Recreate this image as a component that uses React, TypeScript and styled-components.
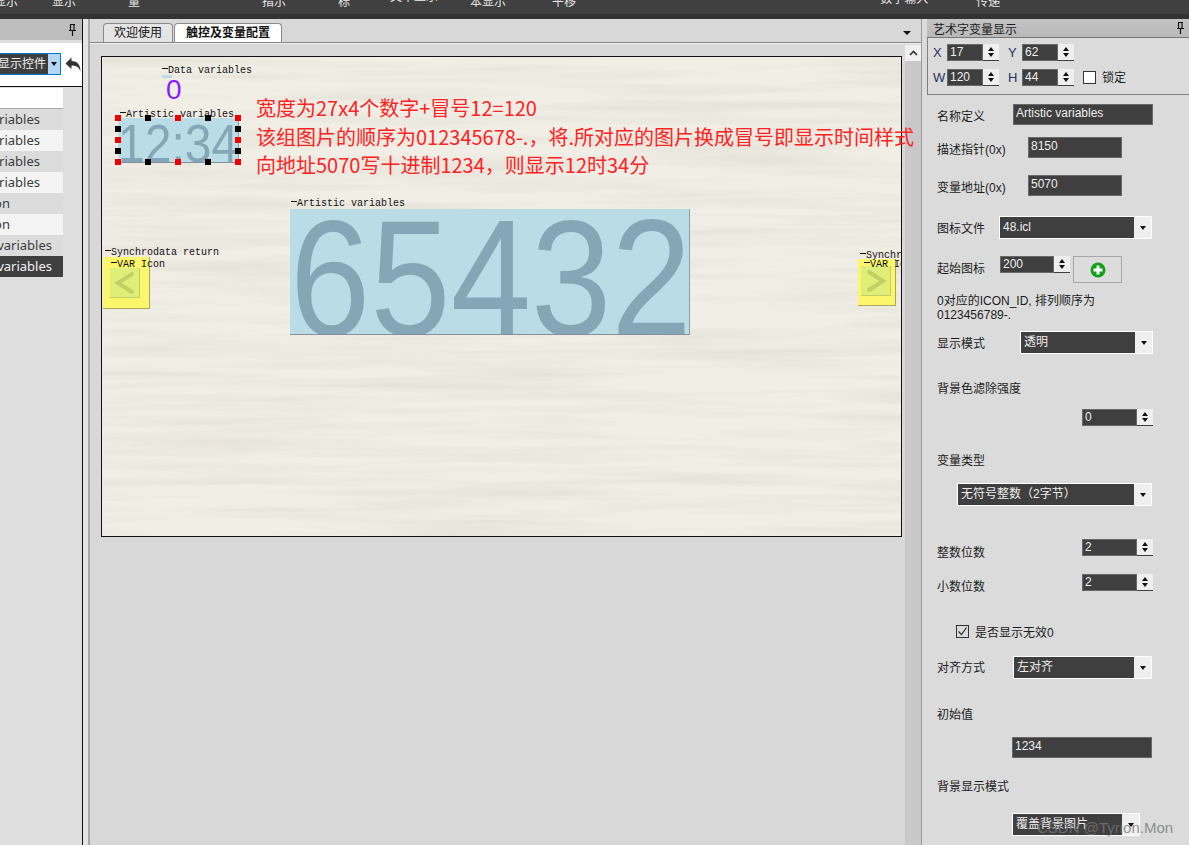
import React from 'react'
import styled, { createGlobalStyle } from 'styled-components'

const CJK = `"Liberation Sans", "Noto Sans CJK SC", sans-serif`
const MONO = `"Liberation Mono", monospace`

const GlobalStyle = createGlobalStyle`
  html, body { margin: 0; padding: 0; background: #d8d8d8; }
  body { font-family: ${CJK}; font-size: 12px; color: #1a1a1a; }
`

const Page = styled.div`
  position: relative;
  width: 1189px;
  height: 845px;
  overflow: hidden;
  display: flex;
  flex-direction: column;
`

const TopBar = styled.div`
  height: 19px;
  flex: none;
  display: flex;
  overflow: hidden;
  background: linear-gradient(#404040 0 14px, #333 14px);
`

const TopLabel = styled.span<{ $gap: number; $up?: number }>`
  margin-left: ${p => p.$gap}px;
  margin-top: ${p => -(p.$up ?? 5)}px;
  color: #e6e6e6;
  white-space: nowrap;
  line-height: 14px;
`

const Main = styled.div`
  flex: 1;
  display: flex;
  min-height: 0;
`

const LeftPanel = styled.aside`
  width: 83px;
  flex: none;
  display: flex;
  flex-direction: column;
  background: #dedede;
  border-right: 1px solid #111;
  box-sizing: border-box;
`

const PanelHead = styled.div`
  height: 21px;
  flex: none;
  display: flex;
  align-items: center;
  justify-content: flex-end;
  padding-right: 5px;
  background: #bdbdbd;
`

const LeftTools = styled.div`
  margin-top: 3px;
  height: 44px;
  flex: none;
  display: flex;
  align-items: center;
  gap: 4px;
  background: #fff;
  border-bottom: 1px solid #111;
  box-sizing: border-box;
`

const ToolSelect = styled.div`
  width: 61px;
  height: 22px;
  margin-top: -1px;
  flex: none;
  display: flex;
  justify-content: flex-end;
  box-sizing: border-box;
  overflow: hidden;
  background: #3f3f3f;
  border: 1px solid #0078d7;
  border-left: 0;
  color: #eee;
  line-height: 20px;
  white-space: nowrap;
`

const ToolArrow = styled.div`
  width: 12px;
  margin-left: 2px;
  flex: none;
  display: flex;
  align-items: center;
  justify-content: center;
  background: #b4d6f2;
`

const List = styled.div`
  width: 63px;
  margin-top: 1px;
`

const ListRow = styled.div<{ $tone: 'blank' | 'even' | 'odd' | 'active'; $right: number }>`
  height: 21px;
  box-sizing: border-box;
  display: flex;
  justify-content: flex-end;
  overflow: hidden;
  padding-right: ${p => p.$right}px;
  font: 13px/20px "Noto Sans", sans-serif;
  white-space: nowrap;
  color: ${p => (p.$tone === 'active' ? '#f2f2f2' : '#3c3c3c')};
  background: ${p =>
    p.$tone === 'active' ? '#3f3f3f' : p.$tone === 'even' ? '#dcdcdc' : p.$tone === 'odd' ? '#f4f4f4' : '#fff'};
  border-bottom: ${p => (p.$tone === 'blank' ? '1px solid #aaa' : '0')};
`

const Gutter = styled.div`
  width: 7px;
  flex: none;
  background: linear-gradient(90deg, #e4e4e4 0 5px, #a8a8a8 5px);
`

const Center = styled.section`
  flex: 1;
  min-width: 0;
  display: flex;
  flex-direction: column;
  background: #d8d8d8;
`

const TabStrip = styled.div`
  height: 24px;
  flex: none;
  display: flex;
  align-items: flex-end;
  gap: 1px;
  padding-left: 13px;
  box-sizing: border-box;
  border-bottom: 1px solid #858585;
  position: relative;
`

const Tab = styled.div<{ $active?: boolean; $w: number }>`
  width: ${p => p.$w}px;
  height: 19px;
  box-sizing: border-box;
  text-align: center;
  line-height: 18px;
  border: 1px solid #8a8a8a;
  border-bottom: 0;
  border-radius: 4px 4px 0 0;
  color: #111;
  background: ${p => (p.$active ? '#fff' : '#e4e4e4')};
  font-weight: ${p => (p.$active ? 700 : 400)};
`

const TabMenu = styled.i`
  position: absolute;
  right: 10px;
  top: 12px;
  border: 4px solid transparent;
  border-top: 4px solid #111;
  border-bottom: 0;
`

const CenterBody = styled.div`
  flex: 1;
  min-height: 0;
  display: flex;
  padding: 1px 0 0 11px;
  box-sizing: border-box;
  border-top: 1px solid #f0f0f0;
`

const CanvasWrap = styled.div`
  padding-top: 11px;
  width: 801px;
  flex: none;
`

const Canvas = styled.div`
  position: relative;
  width: 799px;
  height: 479px;
  border: 1px solid #111;
  overflow: hidden;
  background: #f1eee6;
`

const Grain = styled.svg`
  position: absolute;
  left: 0;
  top: 0;
  width: 100%;
  height: 100%;
`

const Scrollbar = styled.div`
  width: 16px;
  margin-left: 3px;
  flex: none;
  background: #c8c8c8;
`

const ScrollUp = styled.div`
  height: 16px;
  display: flex;
  align-items: center;
  justify-content: center;
  background: #f0f0f0;
`

const WidgetLabel = styled.div<{ $x: number; $y: number }>`
  position: absolute;
  left: ${p => p.$x}px;
  top: ${p => p.$y}px;
  font: 10px/11px ${MONO};
  color: #111;
  white-space: nowrap;
  &::before {
    content: '';
    display: inline-block;
    width: 6px;
    height: 1px;
    margin-right: 0;
    vertical-align: 4px;
    background: #111;
  }
`

const BlueChip = styled.div`
  position: absolute;
  left: 60px;
  top: 18px;
  width: 10px;
  height: 3px;
  background: #bcdde8;
`

const ZeroText = styled.div`
  position: absolute;
  left: 64px;
  top: 19px;
  font: 28px/28px "Liberation Sans", sans-serif;
  color: #8a1cff;
`

const DigitBox = styled.div<{ $x: number; $y: number; $w: number; $h: number }>`
  position: absolute;
  left: ${p => p.$x}px;
  top: ${p => p.$y}px;
  width: ${p => p.$w}px;
  height: ${p => p.$h}px;
  overflow: hidden;
  background: #b9dce7;
  border-right: 1px solid #8a9da6;
  border-bottom: 1px solid #7f929b;
  box-sizing: border-box;
`

const Digits = styled.div<{ $size: number; $top: number; $sx: number; $left: number }>`
  position: absolute;
  left: ${p => p.$left}px;
  top: ${p => p.$top}px;
  font: ${p => p.$size}px/${p => p.$size}px "Liberation Sans", sans-serif;
  color: #85a6b7;
  white-space: nowrap;
  transform: scaleX(${p => p.$sx});
  transform-origin: 0 0;
`

const Handle = styled.i<{ $x: number; $y: number; $red: boolean }>`
  position: absolute;
  left: ${p => p.$x - 3}px;
  top: ${p => p.$y - 3}px;
  width: 6px;
  height: 6px;
  background: ${p => (p.$red ? '#f00000' : '#000')};
`

const NavKey = styled.div<{ $x: number; $y: number; $w: number; $h: number }>`
  position: absolute;
  left: ${p => p.$x}px;
  top: ${p => p.$y}px;
  width: ${p => p.$w}px;
  height: ${p => p.$h}px;
  background: #fbf66c;
  border-right: 1px solid #aaa858;
  border-bottom: 1px solid #aaa858;
  box-sizing: border-box;
`

const NavFace = styled.div<{ $x: number; $y: number }>`
  position: absolute;
  left: ${p => p.$x}px;
  top: ${p => p.$y}px;
  width: 30px;
  height: 30px;
  display: flex;
  align-items: center;
  justify-content: center;
  box-sizing: border-box;
  background: #dfee78;
  border-right: 1px solid #c4cc66;
  border-bottom: 1px solid #c4cc66;
`

const RightPanel = styled.aside`
  width: 268px;
  flex: none;
  box-sizing: border-box;
  padding-left: 5px;
  background: #dbdbdb;
  border-left: 1px solid #9a9a9a;
  display: flex;
  flex-direction: column;
`

const RightHead = styled(PanelHead)`
  height: 18px;
  justify-content: space-between;
  padding: 0 4px 0 6px;
  background: linear-gradient(#c4c4c4, #b8b8b8);
  border-bottom: 1px solid #777;
  box-sizing: content-box;
  color: #1c1c1c;
`

const GeoBox = styled.div`
  height: 57px;
  flex: none;
  box-sizing: border-box;
  border: 1px solid #808080;
  border-top: 0;
  border-right: 0;
  border-bottom: 1px solid #808080;
  padding: 6px 0 0 5px;
  display: flex;
  flex-direction: column;
  gap: 8px;
`

const GeoRow = styled.div`
  display: flex;
  align-items: center;
  height: 17px;
`

const GeoLabel = styled.span<{ $w: number }>`
  width: ${p => p.$w}px;
  flex: none;
  color: #2a3060;
  font-size: 13px;
`

const SpinBox = styled.div<{ $w: number; $gapRight?: number }>`
  display: flex;
  flex: none;
  width: ${p => p.$w + 16}px;
  height: 17px;
  margin-right: ${p => p.$gapRight ?? 0}px;
`

const SpinValue = styled.div`
  flex: 1;
  box-sizing: border-box;
  padding-left: 2px;
  background: #3f3f3f;
  border: 1px solid #686868;
  color: #eee;
  line-height: 15px;
  font-size: 12px;
`

const SpinKeys = styled.div`
  width: 16px;
  flex: none;
  box-sizing: border-box;
  display: flex;
  flex-direction: column;
  align-items: center;
  justify-content: center;
  gap: 2px;
  background: #efefef;
  border-bottom: 1px solid #3f3f3f;
`

const SpinUp = styled.i`
  border: 3px solid transparent;
  border-top: 0;
  border-bottom: 4px solid #111;
`

const SpinDown = styled.i`
  border: 3px solid transparent;
  border-bottom: 0;
  border-top: 4px solid #111;
`

const CheckBox = styled.span<{ $checked?: boolean }>`
  width: 13px;
  height: 13px;
  flex: none;
  box-sizing: border-box;
  display: flex;
  align-items: center;
  justify-content: center;
  background: ${p => (p.$checked ? 'transparent' : '#fff')};
  border: 1px solid #333;
`

const Form = styled.div`
  padding-left: 10px;
  display: flex;
  flex-direction: column;
`

const Row = styled.div<{ $mt: number; $left: number; $w: number; $h: number }>`
  display: grid;
  grid-template-columns: ${p => p.$left}px ${p => p.$w}px;
  height: ${p => p.$h}px;
  margin-top: ${p => p.$mt}px;
  flex: none;
`

const Label = styled.div<{ $dy?: number; $mt?: number }>`
  padding-top: ${p => p.$dy ?? 0}px;
  margin-top: ${p => p.$mt ?? 0}px;
  line-height: 14px;
  color: #1c1c1c;
  white-space: nowrap;
`

const Hint = styled.div`
  margin-top: 11px;
  line-height: 14px;
  font-size: 12px;
  color: #1c1c1c;
  white-space: nowrap;
`

const TextValue = styled.div`
  box-sizing: border-box;
  padding-left: 2px;
  background: #3f3f3f;
  border: 1px solid #686868;
  color: #eee;
  line-height: 17px;
  white-space: nowrap;
  overflow: hidden;
`

const Select = styled.div`
  display: flex;
  box-sizing: border-box;
  border: 1px solid #fff;
  background: #efefef;
`

const SelectValue = styled.div`
  flex: 1;
  min-width: 0;
  padding-left: 3px;
  background: #3f3f3f;
  color: #eee;
  line-height: 20px;
  white-space: nowrap;
`

const SelectArrow = styled.div`
  width: 17px;
  flex: none;
  display: flex;
  align-items: center;
  justify-content: center;
`

const CheckRow = styled.div`
  margin: 34px 0 0 19px;
  height: 13px;
  display: flex;
  align-items: center;
  gap: 6px;
  color: #1c1c1c;
`

const AddButton = styled.div`
  width: 49px;
  height: 27px;
  margin-left: 3px;
  flex: none;
  box-sizing: border-box;
  display: flex;
  align-items: center;
  justify-content: center;
  background: #dcdcdc;
  border: 1px solid #a6a6a6;
`

const SpinWithButton = styled.div`
  display: flex;
  align-items: flex-start;
`

const Note = styled.div`
  position: absolute;
  left: 256px;
  top: 94px;
  color: #ff2222;
  font: 20px/28.5px "Noto Sans CJK SC", sans-serif;
  white-space: nowrap;
`

const Watermark = styled.div`
  position: absolute;
  left: 1037px;
  top: 819px;
  font: 15px/17px "Liberation Sans", sans-serif;
  color: rgba(120, 120, 120, 0.8);
  white-space: nowrap;
`

const Pin = () => (
  <svg width="9" height="12" viewBox="0 0 9 12">
    <path d="M2 0.5h5M2.5 1v5M6 1v5M1 6.5h7M4.5 7v5" stroke="#111" strokeWidth="1.2" fill="none" />
  </svg>
)

const Chevron = ({ flip }: { flip?: boolean }) => (
  <svg width="24" height="24" viewBox="0 0 24 24">
    <path
      d={flip ? 'M5 3l14 9-14 9' : 'M19 3L5 12l14 9'}
      stroke="#c3cf62"
      strokeWidth="4"
      strokeLinecap="round"
      fill="none"
    />
  </svg>
)

const Caret = () => <SpinDown />

const Spin = ({ value, w, gapRight }: { value: string; w: number; gapRight?: number }) => (
  <SpinBox $w={w} $gapRight={gapRight}>
    <SpinValue>{value}</SpinValue>
    <SpinKeys>
      <SpinUp />
      <SpinDown />
    </SpinKeys>
  </SpinBox>
)

const Drop = ({ value }: { value: string }) => (
  <Select>
    <SelectValue>{value}</SelectValue>
    <SelectArrow>
      <Caret />
    </SelectArrow>
  </Select>
)

const listRows = [
  { tone: 'even', text: 'Artistic variables', right: 23 },
  { tone: 'odd', text: 'Artistic variables', right: 23 },
  { tone: 'even', text: 'Artistic variables', right: 23 },
  { tone: 'odd', text: 'Artistic variables', right: 23 },
  { tone: 'even', text: 'VAR Icon', right: 53 },
  { tone: 'odd', text: 'VAR Icon', right: 53 },
  { tone: 'even', text: 'Artistic variables', right: 11 },
  { tone: 'active', text: 'Artistic variables', right: 11 },
] as const

const handleCols = [16, 46, 76, 106, 136]
const handleRows = [61, 72, 83, 94, 105]

export default function App() {
  return (
    <Page>
      <GlobalStyle />
      <TopBar>
        <TopLabel $gap={-6}>显示</TopLabel>
        <TopLabel $gap={34}>显示</TopLabel>
        <TopLabel $gap={52}>量</TopLabel>
        <TopLabel $gap={122}>指示</TopLabel>
        <TopLabel $gap={52}>标</TopLabel>
        <TopLabel $gap={40} $up={10}>文本显示</TopLabel>
        <TopLabel $gap={32}>本显示</TopLabel>
        <TopLabel $gap={46}>平移</TopLabel>
        <TopLabel $gap={304} $up={8}>数字输入</TopLabel>
        <TopLabel $gap={48}>传递</TopLabel>
      </TopBar>
      <Main>
        <LeftPanel>
          <PanelHead>
            <Pin />
          </PanelHead>
          <LeftTools>
            <ToolSelect>
              显示控件
              <ToolArrow>
                <Caret />
              </ToolArrow>
            </ToolSelect>
            <svg width="16" height="16" viewBox="0 0 16 16">
              <path d="M0.5 6.5L6.5 0.5v3.6c5 0 9 3 9 10.4-1.2-4-4-6-9-6v3.6z" fill="#333" />
            </svg>
          </LeftTools>
          <List>
            <ListRow $tone="blank" $right={0} />
            {listRows.map((row, i) => (
              <ListRow key={i} $tone={row.tone} $right={row.right}>
                {row.text}
              </ListRow>
            ))}
          </List>
        </LeftPanel>
        <Gutter />
        <Center>
          <TabStrip>
            <Tab $w={70}>欢迎使用</Tab>
            <Tab $w={108} $active>触控及变量配置</Tab>
            <TabMenu />
          </TabStrip>
          <CenterBody>
            <CanvasWrap>
              <Canvas>
                <Grain>
                  <filter id="paper">
                    <feTurbulence type="fractalNoise" baseFrequency="0.004 0.09" numOctaves="3" seed="4" />
                    <feColorMatrix values="0 0 0 0 0.45  0 0 0 0 0.42  0 0 0 0 0.35  1.1 0 0 0 -0.42" />
                  </filter>
                  <rect width="100%" height="100%" filter="url(#paper)" opacity="0.35" />
                </Grain>
                <WidgetLabel $x={60} $y={8}>Data variables</WidgetLabel>
                <BlueChip />
                <ZeroText>0</ZeroText>
                <DigitBox $x={16} $y={61} $w={121} $h={45}>
                  <Digits $size={54} $top={-2} $sx={0.89} $left={0}>12:34</Digits>
                </DigitBox>
                <WidgetLabel $x={18} $y={52}>Artistic variables</WidgetLabel>
                {handleCols.map((x, i) => (
                  <React.Fragment key={x}>
                    <Handle $x={x} $y={61} $red={i % 2 === 0} />
                    <Handle $x={x} $y={105} $red={i % 2 === 0} />
                  </React.Fragment>
                ))}
                {handleRows.slice(1, 4).map((y, i) => (
                  <React.Fragment key={y}>
                    <Handle $x={16} $y={y} $red={i === 1} />
                    <Handle $x={136} $y={y} $red={i === 1} />
                  </React.Fragment>
                ))}
                <WidgetLabel $x={189} $y={141}>Artistic variables</WidgetLabel>
                <DigitBox $x={188} $y={152} $w={400} $h={126}>
                  <Digits $size={166} $top={-14} $sx={0.87} $left={0}>65432</Digits>
                </DigitBox>
                <NavKey $x={1} $y={200} $w={47} $h={52} />
                <NavFace $x={8} $y={211}>
                  <Chevron />
                </NavFace>
                <WidgetLabel $x={3} $y={190}>Synchrodata return</WidgetLabel>
                <WidgetLabel $x={9} $y={202}>VAR Icon</WidgetLabel>
                <NavKey $x={756} $y={202} $w={38} $h={47} />
                <NavFace $x={759} $y={209}>
                  <Chevron flip />
                </NavFace>
                <WidgetLabel $x={758} $y={193}>Synchrodata return</WidgetLabel>
                <WidgetLabel $x={762} $y={202}>VAR Icon</WidgetLabel>
              </Canvas>
            </CanvasWrap>
            <Scrollbar>
              <ScrollUp>
                <svg width="9" height="6" viewBox="0 0 9 6">
                  <path d="M1 5l3.5-3.5L8 5" stroke="#333" strokeWidth="1.6" fill="none" />
                </svg>
              </ScrollUp>
            </Scrollbar>
          </CenterBody>
        </Center>
        <RightPanel>
          <RightHead>
            <span>艺术字变量显示</span>
            <Pin />
          </RightHead>
          <GeoBox>
            <GeoRow>
              <GeoLabel $w={14}>X</GeoLabel>
              <Spin value="17" w={36} gapRight={9} />
              <GeoLabel $w={14}>Y</GeoLabel>
              <Spin value="62" w={36} gapRight={9} />
            </GeoRow>
            <GeoRow>
              <GeoLabel $w={14}>W</GeoLabel>
              <Spin value="120" w={36} gapRight={9} />
              <GeoLabel $w={14}>H</GeoLabel>
              <Spin value="44" w={36} gapRight={9} />
              <CheckBox />
              <Label style={{ marginLeft: 6 }}>锁定</Label>
            </GeoRow>
          </GeoBox>
          <Form>
            <Row $mt={9} $left={76} $w={140} $h={21}>
              <Label $dy={6}>名称定义</Label>
              <TextValue>Artistic variables</TextValue>
            </Row>
            <Row $mt={12} $left={91} $w={94} $h={21}>
              <Label $dy={6}>描述指针(0x)</Label>
              <TextValue>8150</TextValue>
            </Row>
            <Row $mt={17} $left={91} $w={94} $h={21}>
              <Label $dy={6}>变量地址(0x)</Label>
              <TextValue>5070</TextValue>
            </Row>
            <Row $mt={20} $left={62} $w={153} $h={23}>
              <Label $dy={6}>图标文件</Label>
              <Drop value="48.icl" />
            </Row>
            <Row $mt={17} $left={63} $w={122} $h={27}>
              <Label $dy={6}>起始图标</Label>
              <SpinWithButton>
                <Spin value="200" w={54} />
                <AddButton>
                  <svg width="16" height="16" viewBox="0 0 16 16">
                    <circle cx="8" cy="8" r="7.5" fill="#12a01c" />
                    <path d="M8 3.5v9M3.5 8h9" stroke="#fff" strokeWidth="3" />
                  </svg>
                </AddButton>
              </SpinWithButton>
            </Row>
            <Hint>
              0对应的ICON_ID, 排列顺序为
              <br />
              0123456789-.
            </Hint>
            <Row $mt={9} $left={83} $w={133} $h={23}>
              <Label $dy={6}>显示模式</Label>
              <Drop value="透明" />
            </Row>
            <Label $mt={28}>背景色滤除强度</Label>
            <Row $mt={13} $left={145} $w={71} $h={17}>
              <span />
              <Spin value="0" w={55} />
            </Row>
            <Label $mt={28}>变量类型</Label>
            <Row $mt={15} $left={20} $w={195} $h={23}>
              <span />
              <Drop value="无符号整数（2字节）" />
            </Row>
            <Row $mt={33} $left={145} $w={71} $h={17}>
              <Label $dy={7}>整数位数</Label>
              <Spin value="2" w={55} />
            </Row>
            <Row $mt={18} $left={145} $w={71} $h={17}>
              <Label $dy={6}>小数位数</Label>
              <Spin value="2" w={55} />
            </Row>
            <CheckRow>
              <CheckBox $checked>
                <svg width="11" height="11" viewBox="0 0 11 11">
                  <path d="M1.5 5.5l3 3 5-7" stroke="#333" strokeWidth="1.2" fill="none" />
                </svg>
              </CheckBox>
              是否显示无效0
            </CheckRow>
            <Row $mt={18} $left={76} $w={139} $h={23}>
              <Label $dy={5}>对齐方式</Label>
              <Drop value="左对齐" />
            </Row>
            <Label $mt={29}>初始值</Label>
            <Row $mt={15} $left={75} $w={140} $h={21}>
              <span />
              <TextValue>1234</TextValue>
            </Row>
            <Label $mt={22}>背景显示模式</Label>
            <Row $mt={19} $left={75} $w={128} $h={23}>
              <span />
              <Drop value="覆盖背景图片" />
            </Row>
          </Form>
        </RightPanel>
      </Main>
      <Note>
        宽度为27x4个数字+冒号12=120
        <br />
        该组图片的顺序为012345678-.，将.所对应的图片换成冒号即显示时间样式
        <br />
        向地址5070写十进制1234，则显示12时34分
      </Note>
      <Watermark>CSDN @Tyrion.Mon</Watermark>
    </Page>
  )
}
